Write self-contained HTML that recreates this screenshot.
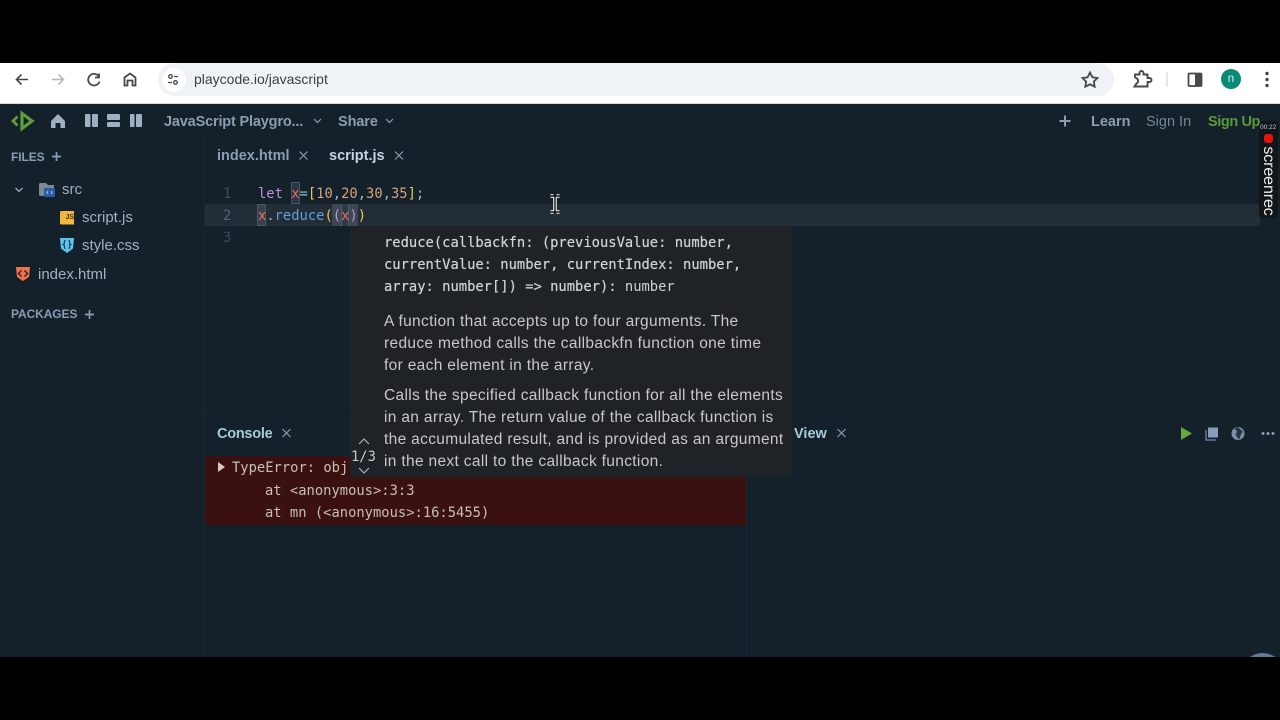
<!DOCTYPE html>
<html lang="en"><head><meta charset="utf-8"><title>playcode.io/javascript</title>
<style>
html,body{margin:0;padding:0;background:#000}
#p{position:relative;width:1280px;height:720px;overflow:hidden;background:#000;font-family:"Liberation Sans",sans-serif}
.b{position:absolute}
.t{position:absolute;white-space:pre;line-height:20px}
.m{font-family:"DejaVu Sans Mono",monospace;font-size:13.8px}
.ui{color:#8b9db3;font-size:14.5px;font-weight:700;letter-spacing:-.1px}
.d{color:#c8c8c8;font-size:15.5px;letter-spacing:.33px}
.s{color:#cfd2d4;font-family:"DejaVu Sans Mono",monospace;font-size:13.8px;text-shadow:0 0 .5px #cfd2d4}
.f{color:#a5b0bd;font-size:15px}
svg{position:absolute;overflow:visible}
</style></head><body><div id="p">
<!-- chrome bar -->
<div class="b" style="left:0;top:63px;width:1280px;height:40px;background:#fff"></div>
<div class="b" style="left:0;top:103px;width:1280px;height:1px;background:#d5d8db"></div>
<div class="b" style="left:158px;top:63px;width:956px;height:33px;border-radius:17px;background:#eff2f7"></div>
<div class="b" style="left:162px;top:68px;width:24px;height:24px;border-radius:12px;background:#fff"></div>
<div class="t" style="left:194px;top:69px;font-size:14px;color:#3c4043">playcode.io/javascript</div>
<svg style="left:0;top:63px" width="1280" height="41" fill="none" stroke="#45484c" stroke-width="1.6">
<path d="M28 16.500H17M21.500 11.500 16.500 16.500 21.500 21.500"/>
<path d="M52 16.500H63M58.500 11.500 63.500 16.500 58.500 21.500" stroke="#b4b7ba"/>
<path d="M98.500 13A5.800 5.800 0 1 0 99.500 18.500M99 10.500V14.500H95" stroke-width="1.800"/>
<path d="M124.500 22.500V14.500L130 10.500 135.500 14.500V22.500H132.500V17.500H127.500V22.500Z" stroke-width="1.800"/>
<circle cx="170.500" cy="13.500" r="1.800" stroke-width="1.300"/><path d="M174 13.500H178M168 19.500H172" stroke-width="1.300"/><circle cx="175.500" cy="19.500" r="1.800" stroke-width="1.300"/>
<path d="M1090 9.500 1092.400 14.300 1097.500 15 1093.800 18.600 1094.700 23.700 1090 21.300 1085.300 23.700 1086.200 18.600 1082.500 15 1087.600 14.300Z" stroke-width="1.800"/>
<path d="M1135 11.500H1139.500V10A2 2 0 0 1 1143.500 10V11.500H1147.500V15H1149.500A2 2 0 0 1 1149.500 19H1147.500V23.500H1134.500L1136.500 20.500A3 3 0 0 0 1136 15L1135 14Z" stroke-width="1.900"/>
<path d="M1167 9V24" stroke="#d5dfe8" stroke-width="1.500"/>
<rect x="1188.500" y="10.500" width="13" height="12.500" rx="1" stroke-width="1.800"/><rect x="1195" y="10.500" width="7" height="12.500" fill="#45484c" stroke="none"/>
<circle cx="1267" cy="10.500" r="1.700" fill="#45484c" stroke="none"/><circle cx="1267" cy="16.500" r="1.700" fill="#45484c" stroke="none"/><circle cx="1267" cy="22.500" r="1.700" fill="#45484c" stroke="none"/>
</svg>
<div class="b" style="left:1221px;top:69px;width:20px;height:20px;border-radius:10px;background:#0b8a78;color:#d5f2ea;font-size:11.500px;line-height:20px;text-align:center">n</div>
<!-- app -->
<div class="b" style="left:0;top:104px;width:1280px;height:553px;background:#14202a"></div>
<div class="b" style="left:0;top:137px;width:1280px;height:1px;background:#18252f"></div>
<div class="b" style="left:204px;top:138px;width:1px;height:519px;background:#1b2833"></div>
<div class="b" style="left:746px;top:478px;width:1px;height:179px;background:#1b2833"></div>
<div class="b" style="left:205px;top:415px;width:1075px;height:1px;background:#18252f"></div>
<div class="b" style="left:205px;top:204px;width:1055px;height:22px;background:#232d37"></div>
<!-- logo and top icons -->
<svg style="left:0;top:104px" width="160" height="34">
<path d="M17.500 12.500 13 17 17.500 21.500" fill="none" stroke="#5f9d3a" stroke-width="2.800"/>
<path d="M22 9.500 32 17 22 24.500Z" fill="none" stroke="#5f9d3a" stroke-width="3.200"/>
<path d="M51 17 58 10 65 17V24H60.500V19H55.500V24H51Z" fill="#9fb0c5"/>
<rect x="85" y="10" width="5.500" height="13" rx="1" fill="#9fb0c5"/><rect x="92" y="10" width="6" height="13" rx="1" fill="#9fb0c5"/>
<rect x="107" y="10" width="13" height="6" rx="1" fill="#9fb0c5"/><rect x="107" y="18" width="13" height="5" rx="1" fill="#9fb0c5"/>
<rect x="130" y="10" width="4.500" height="13" rx="1" fill="#9fb0c5"/><rect x="136" y="10" width="6" height="13" rx="1" fill="#9fb0c5"/>
</svg>
<div class="t ui" style="left:164px;top:112px;letter-spacing:-.17px">JavaScript Playgro...</div>
<div class="t ui" style="left:338px;top:112px">Share</div>
<svg style="left:0;top:104px" width="400" height="34" fill="none" stroke="#8b9db3" stroke-width="1.200">
<path d="M314 15 317.500 18.500 321 15M386 15 389.500 18.500 393 15"/>
</svg>
<svg style="left:1058px;top:114px" width="14" height="14" stroke="#8b9db3" stroke-width="2"><path d="M7 1.500V12.500M1.500 7H12.500"/></svg>
<div class="t ui" style="left:1091px;top:112px;letter-spacing:0">Learn</div>
<div class="t" style="left:1146px;top:112px;color:#72859b;font-size:14.5px">Sign In</div>
<div class="t" style="left:1208px;top:112px;color:#5a9a3a;font-size:14.5px;font-weight:700;letter-spacing:-.4px">Sign Up</div>
<!-- recorder -->
<div class="b" style="left:1259px;top:121px;width:19px;height:97px;border-radius:4px;background:#11161b"></div>
<div class="t" style="left:1260px;top:123px;font-size:6.500px;line-height:10px;color:#ccc">00:22</div>
<div class="b" style="left:1264px;top:134px;width:9px;height:9px;border-radius:3px;background:#e3130d"></div>
<div class="t" style="left:1228px;top:171px;width:80px;text-align:center;font-size:16px;color:#eee;transform:rotate(90deg);letter-spacing:-.1px">screenrec</div>
<!-- sidebar -->
<div class="t" style="left:11px;top:147px;color:#8b9db3;font-size:12px;font-weight:700;letter-spacing:-.1px">FILES</div>
<svg style="left:51px;top:151px" width="11" height="11" stroke="#8b9db3" stroke-width="1.700"><path d="M5.500 1V10M1 5.500H10"/></svg>
<svg style="left:0;top:169px" width="100" height="120" fill="none">
<path d="M15.500 19 19 22.500 22.500 19" stroke="#9cacbb" stroke-width="1.300"/>
<path d="M39 15.500A1.500 1.500 0 0 1 40.500 14H46L48 16H54V19H46V27H40.500A1.500 1.500 0 0 1 39 25.500Z" fill="#7d8a96"/>
<rect x="44" y="19" width="11" height="9" rx="1" fill="#2a5ba8"/>
<path d="M48 22 46.800 23.500 48 25M51 22 52.200 23.500 51 25" stroke="#a9c7ee"/>
<path d="M60 43.500A1.500 1.500 0 0 1 61.500 42H74V55.500H61.500A1.500 1.500 0 0 1 60 54Z" fill="#f0b840"/>
<path d="M60 69H74L73 79.500 67 84 61 79.500Z" fill="#5ec5ee"/>
<path d="M65.500 71.500C63.500 71.500 65 75 63.500 75.500 65 76 63.500 79.500 65.500 79.500M68.500 71.500C70.500 71.500 69 75 70.500 75.500 69 76 70.500 79.500 68.500 79.500" stroke="#14384a" stroke-width="1.200"/>
<path d="M16 98H30L29 108 23 112 17 108Z" fill="#ec7350"/>
<path d="M21.500 101.500 18.500 104.500 21.500 107.500M24.500 101.500 27.500 104.500 24.500 107.500" stroke="#3a1b12" stroke-width="1.400"/>
</svg>
<div class="t" style="left:62px;top:212px;width:12px;text-align:right;font-size:7px;line-height:12px;font-weight:700;color:#4b3405">JS</div>
<div class="t f" style="left:62px;top:180px">src</div>
<div class="t f" style="left:82px;top:208px">script.js</div>
<div class="t f" style="left:82px;top:236px">style.css</div>
<div class="t f" style="left:38px;top:265px">index.html</div>
<div class="t" style="left:11px;top:304px;color:#8b9db3;font-size:12px;font-weight:700;letter-spacing:-.1px">PACKAGES</div>
<svg style="left:84px;top:309px" width="11" height="11" stroke="#8b9db3" stroke-width="1.700"><path d="M5.500 1V10M1 5.500H10"/></svg>
<!-- tabs -->
<div class="t ui" style="left:217px;top:146px;letter-spacing:0">index.html</div>
<div class="t" style="left:329px;top:146px;color:#c7d3df;font-size:14.5px;font-weight:700">script.js</div>
<svg style="left:0;top:150px" width="420" height="12" stroke="#8b9db3" stroke-width="1.200"><path d="M299.500 1.500 307.500 9.500M307.500 1.500 299.500 9.500M395 1.500 403 9.500M403 1.500 395 9.500"/></svg>
<!-- editor -->
<div class="t m" style="left:223px;top:184px;color:#3f4c59">1</div>
<div class="t m" style="left:223px;top:206px;color:#55626f">2</div>
<div class="t m" style="left:223px;top:228px;color:#3f4c59">3</div>
<div class="b" style="left:291px;top:182px;width:9px;height:22px;background:#2a3641;box-shadow:inset 0 0 0 1px #47535e"></div>
<div class="b" style="left:257px;top:204px;width:9px;height:22px;background:#36414b;box-shadow:inset 0 0 0 1px #4a5661"></div>
<div class="b" style="left:332px;top:204px;width:9px;height:22px;background:#3c4753"></div>
<div class="b" style="left:341px;top:204px;width:8px;height:22px;background:#2e3a45;box-shadow:inset -1px 0 0 #505c68,inset 1px 0 0 #505c68"></div>
<div class="b" style="left:349px;top:204px;width:9px;height:22px;background:#3c4753"></div>
<div class="t m" style="left:258px;top:184px;color:#bd93d8">let <span style="color:#ee6a6a">x</span><span style="color:#7fd0d8">=</span><span style="color:#e8c94f">[</span><span style="color:#d6a27c">10</span><span style="color:#aab2bb">,</span><span style="color:#d6a27c">20</span><span style="color:#aab2bb">,</span><span style="color:#d6a27c">30</span><span style="color:#aab2bb">,</span><span style="color:#d6a27c">35</span><span style="color:#e8c94f">]</span><span style="color:#aab2bb">;</span></div>
<div class="t m" style="left:258px;top:206px;color:#aab2bb"><span style="color:#ee6a6a">x</span>.<span style="color:#5f9fdc">reduce</span><span style="color:#e8c94f">(</span><span style="color:#bd93d8">(</span><span style="color:#ee6a6a">x</span><span style="color:#bd93d8">)</span><span style="color:#e8c94f">)</span></div>
<!-- console -->
<div class="b" style="left:205px;top:456px;width:541px;height:69px;background:#3a1110"></div>
<div class="t" style="left:217px;top:424px;color:#a9cbd8;font-size:14.5px;font-weight:700;letter-spacing:-.25px">Console</div>
<svg style="left:282px;top:428px" width="10" height="10" stroke="#8b9db3" stroke-width="1.200"><path d="M.5 1 8.500 9M8.500 1 .5 9"/></svg>
<svg style="left:218px;top:462px" width="8" height="10"><path d="M0 0 7 5 0 10Z" fill="#d8c8c0"/></svg>
<div class="t m" style="left:232px;top:458px;color:#c8beb5">TypeError: obj</div>
<div class="t m" style="left:265px;top:481px;color:#c8beb5">at &lt;anonymous&gt;:3:3</div>
<div class="t m" style="left:265px;top:503px;color:#c8beb5">at mn (&lt;anonymous&gt;:16:5455)</div>
<!-- tooltip -->
<div class="b" style="left:350px;top:226px;width:442px;height:251px;background:#1f2327"></div>
<div class="t s" style="left:384px;top:233px">reduce(callbackfn: (previousValue: number,</div>
<div class="t s" style="left:384px;top:255px">currentValue: number, currentIndex: number,</div>
<div class="t s" style="left:384px;top:277px">array: number[]) =&gt; number): <span style="text-shadow:none">number</span></div>
<div class="t d" style="left:384px;top:312px">A function that accepts up to four arguments. The</div>
<div class="t d" style="left:384px;top:334px">reduce method calls the callbackfn function one time</div>
<div class="t d" style="left:384px;top:356px">for each element in the array.</div>
<div class="t d" style="left:384px;top:386px">Calls the specified callback function for all the elements</div>
<div class="t d" style="left:384px;top:408px">in an array. The return value of the callback function is</div>
<div class="t d" style="left:384px;top:430px">the accumulated result, and is provided as an argument</div>
<div class="t d" style="left:384px;top:452px">in the next call to the callback function.</div>
<svg style="left:358px;top:437px" width="13" height="40" fill="none" stroke="#b8bcc0" stroke-width="1.100"><path d="M1 7 6 2 11 7M1 31 6 36 11 31"/></svg>
<div class="t m" style="left:351px;top:447px;color:#c4c8cb">1/3</div>
<!-- view -->
<div class="t" style="left:794px;top:424px;color:#a9cbd8;font-size:14.5px;font-weight:700">View</div>
<svg style="left:837px;top:428px" width="10" height="10" stroke="#8b9db3" stroke-width="1.200"><path d="M.5 1 8.500 9M8.500 1 .5 9"/></svg>
<svg style="left:1170px;top:420px" width="110" height="26">
<path d="M11 7 22 13.500 11 20Z" fill="#6aa63f"/>
<rect x="38" y="7.500" width="10" height="10" fill="#8a9cb8"/><path d="M36 10V20H46" fill="none" stroke="#66778f" stroke-width="1.500"/>
<circle cx="68" cy="13.500" r="6.500" fill="#7e8fa5"/><path d="M64 9C67 10 68 12 65.500 14 66.500 17 68 18 69 19.500 71 16 70 14 73 12 71 9 69 9 68 7Z" fill="#263340"/>
<circle cx="93" cy="13.500" r="1.500" fill="#8b9db3"/><circle cx="98" cy="13.500" r="1.500" fill="#8b9db3"/><circle cx="103" cy="13.500" r="1.500" fill="#8b9db3"/>
</svg>
<!-- cursor -->
<svg style="left:549px;top:195px" width="12" height="18" fill="none" stroke="#fff" stroke-width="3.500"><path d="M1.500 1H4.500M7.500 1H10.500M6 1V17M1.500 17H4.500M7.500 17H10.500"/></svg>
<svg style="left:549px;top:195px" width="12" height="18" fill="none" stroke="#111" stroke-width="1.400"><path d="M1.500 1H4.500Q6 1 6 2.500V15.500Q6 17 4.500 17H1.500M10.500 1H7.500Q6 1 6 2.500M6 15.500Q6 17 7.500 17H10.500"/></svg>
<!-- bottom-right bubble -->
<div class="b" style="left:1240px;top:640px;width:40px;height:17px;overflow:hidden"><div class="b" style="left:1px;top:13px;width:43px;height:43px;border-radius:50%;background:#63798f"></div></div>
</div></body></html>
